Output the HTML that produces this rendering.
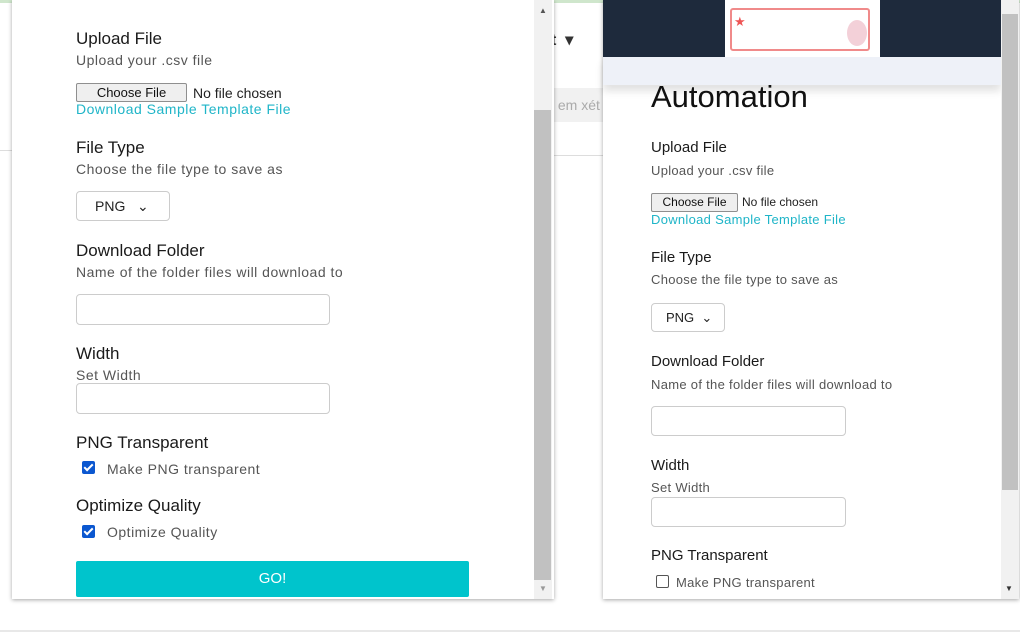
<!DOCTYPE html>
<html><head><style>
*{margin:0;padding:0;box-sizing:border-box}
body{width:1020px;height:638px;background:#fff;position:relative;overflow:hidden;font-family:"Liberation Sans",sans-serif;color:#222}
.a{position:absolute;white-space:nowrap}
.h{font-size:17px;color:#1a1a1a}
.s{font-size:14px;color:#555;letter-spacing:.5px}
.l{color:#1fb5c8 !important;letter-spacing:.5px}
.btn{position:absolute;background:#efefef;border:1px solid #8f8f8f;border-radius:2px;font-size:13px;text-align:center;color:#111}
.inp{position:absolute;border:1px solid #ccc;border-radius:4px;background:#fff}
.cb{position:absolute;width:13px;height:13px;border-radius:2px}
.on{background:#0b57d0}
.on:after{content:"";position:absolute;left:4px;top:1px;width:3px;height:7px;border:solid #fff;border-width:0 2px 2px 0;transform:rotate(45deg)}
.off{border:1px solid #555;background:#fff}
.h2{font-size:15px;color:#1a1a1a}
.s2{font-size:13px;color:#555;letter-spacing:.3px}
</style></head><body>
<div class="a" style="left:0;top:0;width:1020px;height:3px;background:#cfe6cc"></div>
<div class="a" style="left:551px;top:30px;font-size:16px;font-weight:bold;color:#333">t&nbsp;&nbsp;▾</div>
<div class="a" style="left:554px;top:88px;width:50px;height:34px;background:#f1f1f1;color:#aaa;font-size:14px;padding:9px 0 0 0">&nbsp;em xét</div>
<div class="a" style="left:0;top:630px;width:1020px;height:2px;background:#e8e8e8"></div>
<div class="a" style="left:0;top:150px;width:12px;height:1px;background:#ddd"></div>
<div class="a" style="left:554px;top:155px;width:50px;height:1px;background:#ddd"></div>

<div class="a" style="left:12px;top:0;width:542px;height:599px;background:#fff;box-shadow:0 1px 4px rgba(0,0,0,.35)">
<div class="a" style="left:522px;top:0;width:18px;height:599px;background:#f1f1f1"></div>
<div class="a" style="left:522px;top:110px;width:17px;height:470px;background:#c1c1c1"></div>
<div class="a" style="left:527px;top:6px;font-size:8px;color:#555">▲</div>
<div class="a" style="left:527px;top:584px;font-size:8px;color:#999">▼</div>
</div>
<div class="a h" style="left:76px;top:29px">Upload File</div>
<div class="a s" style="left:76px;top:52px">Upload your .csv file</div>
<div class="btn" style="left:76px;top:83px;width:111px;height:19px;line-height:17px">Choose File</div>
<div class="a" style="left:193px;top:85px;font-size:14px;color:#222">No file chosen</div>
<div class="a s l" style="left:76px;top:101px">Download Sample Template File</div>
<div class="a h" style="left:76px;top:138px">File Type</div>
<div class="a s" style="left:76px;top:161px">Choose the file type to save as</div>
<div class="inp" style="left:76px;top:191px;width:94px;height:30px;font-size:14px;padding:6px 0 0 18px">PNG&nbsp;&nbsp;&nbsp;⌄</div>
<div class="a h" style="left:76px;top:241px">Download Folder</div>
<div class="a s" style="left:76px;top:264px">Name of the folder files will download to</div>
<div class="inp" style="left:76px;top:294px;width:254px;height:31px"></div>
<div class="a h" style="left:76px;top:344px">Width</div>
<div class="a s" style="left:76px;top:367px">Set Width</div>
<div class="inp" style="left:76px;top:383px;width:254px;height:31px"></div>
<div class="a h" style="left:76px;top:433px">PNG Transparent</div>
<div class="cb on" style="left:82px;top:461px"></div>
<div class="a s" style="left:107px;top:461px">Make PNG transparent</div>
<div class="a h" style="left:76px;top:496px">Optimize Quality</div>
<div class="cb on" style="left:82px;top:525px"></div>
<div class="a s" style="left:107px;top:524px">Optimize Quality</div>
<div class="a" style="left:76px;top:561px;width:393px;height:36px;background:#00c4cc;color:#fff;font-size:15px;text-align:center;line-height:36px;border-radius:2px">GO!</div>

<div class="a" style="left:603px;top:0;width:416px;height:599px;background:#fff;box-shadow:0 1px 4px rgba(0,0,0,.35)">
<div class="a" style="left:0;top:0;width:398px;height:57px;background:#1e2a3c"></div>
<div class="a" style="left:0;top:57px;width:398px;height:28px;background:#eef1f8;box-shadow:0 6px 8px rgba(0,0,0,.12)"></div>
<div class="a" style="left:122px;top:0;width:155px;height:57px;background:#fff">
<div class="a" style="left:5px;top:8px;width:140px;height:43px;border:2px solid #f08a8a;border-radius:3px"></div>
<div class="a" style="left:9px;top:14px;color:#e55;font-size:13px">★</div>
<div class="a" style="left:122px;top:20px;width:20px;height:26px;background:#f3d0d8;border-radius:50%"></div>
</div>
<div class="a" style="left:398px;top:0;width:18px;height:599px;background:#f1f1f1"></div>
<div class="a" style="left:399px;top:14px;width:16px;height:476px;background:#c1c1c1"></div>
<div class="a" style="left:402px;top:584px;font-size:8px;color:#333">▼</div>
</div>
<div class="a" style="left:651px;top:79px;font-size:31px;color:#111">Automation</div>
<div class="a h2" style="left:651px;top:139px">Upload File</div>
<div class="a s2" style="left:651px;top:163px">Upload your .csv file</div>
<div class="btn" style="left:651px;top:193px;width:87px;height:19px;line-height:17px;font-size:12px">Choose File</div>
<div class="a" style="left:742px;top:195px;font-size:12px;color:#222">No file chosen</div>
<div class="a s2 l" style="left:651px;top:212px">Download Sample Template File</div>
<div class="a h2" style="left:651px;top:249px">File Type</div>
<div class="a s2" style="left:651px;top:272px">Choose the file type to save as</div>
<div class="inp" style="left:651px;top:303px;width:74px;height:29px;font-size:13px;padding:6px 0 0 14px">PNG&nbsp;&nbsp;⌄</div>
<div class="a h2" style="left:651px;top:353px">Download Folder</div>
<div class="a s2" style="left:651px;top:377px">Name of the folder files will download to</div>
<div class="inp" style="left:651px;top:406px;width:195px;height:30px"></div>
<div class="a h2" style="left:651px;top:457px">Width</div>
<div class="a s2" style="left:651px;top:480px">Set Width</div>
<div class="inp" style="left:651px;top:497px;width:195px;height:30px"></div>
<div class="a h2" style="left:651px;top:547px">PNG Transparent</div>
<div class="cb off" style="left:656px;top:575px"></div>
<div class="a s2" style="left:676px;top:575px">Make PNG transparent</div>
</body></html>
